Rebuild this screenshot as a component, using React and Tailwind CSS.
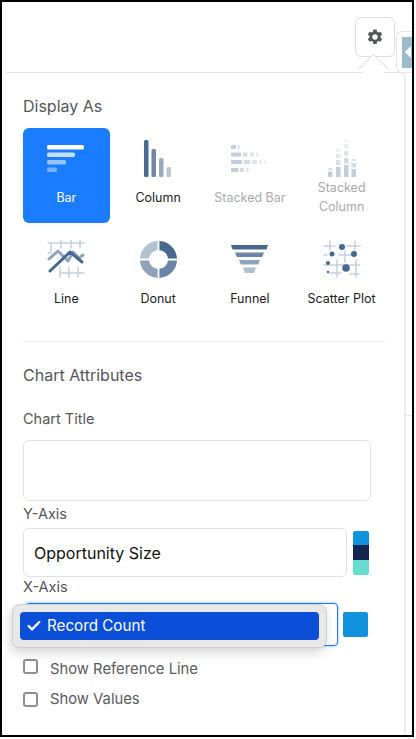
import React from 'react';
import { Check } from 'lucide-react';

const BarIcon = () => (
    <svg width="38" height="27" viewBox="0 0 38 27">
        <rect x="0" y="0" width="37" height="4.500" rx="1.500" fill="#ffffff" />
        <rect x="0" y="7.500" width="28" height="4.500" rx="1.500" fill="#ffffff" fillOpacity=".75" />
        <rect x="0" y="15" width="19" height="4.500" rx="1.500" fill="#ffffff" fillOpacity=".55" />
        <rect x="0" y="22.500" width="10" height="4.500" rx="1.500" fill="#ffffff" fillOpacity=".4" />
    </svg>
);

const ColumnIcon = () => (
    <svg width="28" height="37" viewBox="0 0 28 37">
        <rect x="0" y="0" width="4.500" height="37" rx="1.500" fill="#4a6a90" />
        <rect x="7.500" y="9" width="4.500" height="28" rx="1.500" fill="#6f88a8" />
        <rect x="15" y="18" width="4.500" height="19" rx="1.500" fill="#98a9c0" />
        <rect x="22.500" y="27" width="4.500" height="10" rx="1.500" fill="#bac6d6" />
    </svg>
);

const StackedBarIcon = () => (
    <svg width="37" height="27" viewBox="0 0 37 27">
        <g fill="#c3cedb">
            <rect x="0" y="0" width="5" height="4" rx="1" />
            <rect x="6.500" y="0" width="2" height="4" fill="#dde3ea" />
            <rect x="0" y="7.500" width="10" height="4" rx="1" />
            <rect x="12" y="7.500" width="4.500" height="4" fill="#d3dbe5" />
            <rect x="19" y="7.500" width="3.500" height="4" fill="#e0e5ec" />
            <rect x="25" y="7.500" width="2.500" height="4" fill="#e9edf1" />
            <rect x="0" y="15" width="11" height="4" rx="1" />
            <rect x="13" y="15" width="6" height="4" fill="#d3dbe5" />
            <rect x="21" y="15" width="5" height="4" fill="#e0e5ec" />
            <rect x="28" y="15" width="3" height="4" fill="#e9edf1" />
            <rect x="33" y="15" width="3" height="4" fill="#f2f4f7" />
            <rect x="0" y="23" width="7.500" height="4" rx="1" />
            <rect x="9" y="23" width="4" height="4" fill="#d3dbe5" />
            <rect x="15" y="23" width="2.500" height="4" fill="#e0e5ec" />
        </g>
    </svg>
);

const StackedColumnIcon = () => (
    <svg width="28" height="37" viewBox="0 0 28 37">
        <rect x="0" y="28" width="4.500" height="2" fill="#d9e0e8" />
        <rect x="0" y="31.500" width="4.500" height="5.500" rx="1" fill="#c3cedb" />
        <rect x="8" y="9" width="4.500" height="3" fill="#eef1f4" />
        <rect x="8" y="14" width="4.500" height="4" fill="#e4e9ef" />
        <rect x="8" y="20" width="4.500" height="5" fill="#d9e0e8" />
        <rect x="8" y="27" width="4.500" height="10" fill="#c3cedb" />
        <rect x="16" y="0" width="4.500" height="2.500" fill="#f2f4f7" />
        <rect x="16" y="4" width="4.500" height="4" fill="#e9edf1" />
        <rect x="16" y="11" width="4.500" height="4.500" fill="#dfe4eb" />
        <rect x="16" y="18" width="4.500" height="5.500" fill="#d2dae4" />
        <rect x="16" y="25" width="4.500" height="12" fill="#c3cedb" />
        <rect x="23.500" y="19" width="4.500" height="2" fill="#dfe4eb" />
        <rect x="23.500" y="23" width="4.500" height="4.500" fill="#d2dae4" />
        <rect x="23.500" y="29" width="4.500" height="8" fill="#c3cedb" />
    </svg>
);

const LineIcon = () => (
    <svg width="38" height="38" viewBox="0 0 38 38" fill="none">
        <g stroke="#c5d0dd" strokeWidth="1.500" strokeLinecap="round">
            <path d="M1 3h36M4 3v10M1 13h3M14 0v8M24 0v8M33 0v8" />
            <path d="M13 33h24M13 27v10M22 27v10M31 27v10" />
        </g>
        <path d="M2 19l9-8 6 6 4 4 5-9 6 6 4-3" stroke="#92a5bd" strokeWidth="3" strokeLinecap="round" strokeLinejoin="round" />
        <path d="M3 31l20-19 12 10" stroke="#47688f" strokeWidth="3" strokeLinecap="round" strokeLinejoin="round" />
    </svg>
);

const DonutIcon = () => (
    <svg width="37" height="37" viewBox="0 0 37 37" fill="none">
        <g strokeWidth="9">
            <path d="M18.500 4.500A14 14 0 0 1 32.500 18.500" stroke="#47688f" />
            <path d="M32.500 18.500A14 14 0 0 1 18.500 32.500" stroke="#6b85a6" />
            <path d="M18.500 32.500A14 14 0 0 1 4.500 18.500" stroke="#8fa2ba" />
            <path d="M4.500 18.500A14 14 0 0 1 18.500 4.500" stroke="#b3c0d0" />
        </g>
        <path d="M18.500 0v37M0 18.500h37" stroke="#ffffff" strokeWidth="1.800" />
    </svg>
);

const FunnelIcon = () => (
    <svg width="37" height="28" viewBox="0 0 37 28">
        <path d="M0 0h37l-1.500 4.500H1.500z" fill="#47688f" />
        <path d="M4 7.500h29l-1.800 4.500H5.800z" fill="#6b85a6" />
        <path d="M8 15h21l-1.800 4.500H9.800z" fill="#8fa2ba" />
        <path d="M12 22.500h13L23.200 28H13.800z" fill="#b3c0d0" />
    </svg>
);

const ScatterIcon = () => (
    <svg width="38" height="38" viewBox="0 0 38 38" fill="none">
        <g stroke="#c5d0dd" strokeWidth="1.500" strokeLinecap="round">
            <path d="M1 6h11M7 1v9M24 6h13M32 1v9" />
            <path d="M1 15h3M16 15h14M22 11v11M1 25h36M14 20v17M33 20v17M27 34h9M7 33h11" />
        </g>
        <circle cx="19" cy="7" r="3" fill="#47688f" />
        <circle cx="9" cy="14" r="2.500" fill="#47688f" />
        <circle cx="31" cy="14" r="3" fill="#47688f" />
        <circle cx="5" cy="23" r="2" fill="#47688f" />
        <circle cx="23" cy="28" r="3.800" fill="#47688f" />
        <circle cx="5" cy="32" r="1.200" fill="#47688f" />
    </svg>
);

const GearIcon = () => (
    <svg width="16" height="17" viewBox="0 0 16 17">
        <path fillRule="evenodd" fill="#54565a" d="M6.400.5h3.200l.5 2.200 1.300.7 2.100-.7 1.600 2.800-1.600 1.500v1.500l1.600 1.500-1.600 2.800-2.100-.7-1.300.7-.5 2.200H6.400l-.5-2.200-1.300-.7-2.100.7L.900 10l1.600-1.500V7L.900 5.500l1.600-2.800 2.100.7 1.300-.7zM8 5.300a2.700 2.700 0 1 0 0 5.400 2.700 2.700 0 0 0 0-5.400z" />
    </svg>
);

const tiles = [
    { label: 'Bar', icon: <BarIcon />, active: true },
    { label: 'Column', icon: <ColumnIcon /> },
    { label: 'Stacked Bar', icon: <StackedBarIcon />, disabled: true },
    { label: 'Stacked Column', icon: <StackedColumnIcon />, disabled: true, tall: true },
    { label: 'Line', icon: <LineIcon /> },
    { label: 'Donut', icon: <DonutIcon /> },
    { label: 'Funnel', icon: <FunnelIcon /> },
    { label: 'Scatter Plot', icon: <ScatterIcon /> },
];

const Tile = ({ label, icon, active, disabled, tall }) => (
    <div className={`flex h-[95px] flex-col items-center rounded-md text-center text-[12.500px] leading-[19px] ${active ? 'bg-[#1a7cff] text-white' : disabled ? 'text-[#a9a9ab]' : 'text-[#1c1c1e]'}`}>
        <div className="flex h-[60px] shrink-0 items-center justify-center">{icon}</div>
        <div className={tall ? '-mt-[10px]' : ''}>{label}</div>
    </div>
);

const Field = ({ children, className }) => (
    <div className={`rounded-md border border-[#e2e2e2] bg-white ${className}`}>{children}</div>
);

const CheckRow = ({ label, boxClass }) => (
    <label className="flex h-[30px] items-center gap-[12px]">
        <span className={`h-[15px] w-[15px] rounded-[3px] border-2 border-[#8e8e8e] bg-white ${boxClass}`} />
        <span className="mt-[1px] text-[14.800px] text-[#5a5a5e]">{label}</span>
    </label>
);

export default function App() {
    return (
        <div className="relative h-[739px] w-[416px] overflow-hidden bg-white font-['Inter',sans-serif]">
            <div className="relative flex h-[737px] w-[414px] flex-col overflow-hidden border-2 border-black">
                {/* gear button */}
                <div className="flex h-[70px] shrink-0 justify-end pr-[17px] pt-[15px]">
                    <div className="flex h-[40px] w-[40px] items-center justify-center rounded-md border border-[#dedede] bg-white">
                        <GearIcon />
                    </div>
                </div>

                {/* popover */}
                <div className="mr-[6px] ml-[1px] flex-1 rounded-t-md border-x-2 border-t border-x-[#ededed] border-t-[#e4e4e4] border-l-transparent bg-white pl-[18px] pr-[18px]">
                    <div className="pt-[23px] text-[16px] leading-[20px] text-[#56565a]">Display As</div>

                    <div className="mt-[12px] grid w-[362px] grid-cols-4 gap-x-[5px] gap-y-[6px]">
                        {tiles.map((tile) => <Tile key={tile.label} {...tile} />)}
                    </div>

                    <div className="mt-[17px] w-[362px] border-t border-[#ececec]" />

                    <div className="mt-[23px] text-[16px] leading-[20px] text-[#56565a]">Chart Attributes</div>

                    <div className="mt-[25px] text-[14.500px] leading-[18px] text-[#56565a]">Chart Title</div>
                    <Field className="mt-[12px] h-[61px] w-[348px]" />

                    <div className="mt-[4px] text-[14.500px] leading-[18px] text-[#56565a]">Y-Axis</div>
                    <div className="mt-[5px] flex w-[346px] items-center gap-[6px]">
                        <Field className="flex h-[49px] w-[324px] items-center px-[10px] text-[16px] text-[#111111]">Opportunity Size</Field>
                        <div className="flex h-[44px] w-[16px] flex-col overflow-hidden rounded-[2px]">
                            <div className="flex-1 bg-[#1192dd]" />
                            <div className="flex-1 bg-[#14264f]" />
                            <div className="flex-1 bg-[#67dccf]" />
                        </div>
                    </div>

                    <div className="mt-[1px] text-[14.500px] leading-[18px] text-[#56565a]">X-Axis</div>
                    <div className="mt-[7px] flex w-[346px] items-center gap-[5px] pl-[2px]">
                        <div className="h-[43px] w-[313px] rounded-[4px] border-[1.500px] border-[#1f7aff] bg-white shadow-[0_0_3px_#7fb2ff]" />
                        <div className="h-[25px] w-[25px] rounded-[2px] bg-[#1192dd]" />
                    </div>

                    <div className="mt-[8px]">
                        <CheckRow label="Show Reference Line" boxClass="-mt-[5px]" />
                        <CheckRow label="Show Values" />
                    </div>
                </div>

                {/* select menu open over the x-axis field */}
                <div className="absolute left-[10px] top-[602px] flex h-[44px] w-[315px] items-center rounded-lg border border-[#cfcfcf] bg-[#e8e8e8] px-[7px] shadow-[-2px_5px_12px_rgba(0,0,0,0.16)]">
                    <div className="flex h-[28px] w-full items-center rounded-[4px] bg-[#0b4fd9] pl-[6px] text-[15.200px] text-white">
                        <Check size={16} strokeWidth={3.5} className="mr-[5px]" />
                        Record Count
                    </div>
                </div>

                {/* arrow under the gear */}
                <div className="absolute left-[361px] top-[56px] h-[21px] w-[21px] rotate-45 border-l border-t border-[#dedede] bg-white" />
                <div className="absolute left-[350px] top-[71px] h-[6px] w-[44px] bg-white" />

                {/* sliver of the next panel */}
                <div className="absolute left-[394px] top-[29px] flex h-[42px] w-[16px] items-center rounded-l-md border border-r-0 border-[#e6e6e6] bg-white pl-[5px]">
                    <div className="flex h-[31px] w-[11px] items-center bg-[#9dbccb] pl-[3px]">
                        <div className="h-0 w-0 border-y-[6px] border-r-[6px] border-y-transparent border-r-white" />
                    </div>
                </div>
                <div className="absolute left-[403px] top-[413px] w-[7px] border-t border-[#e6e6e6]" />
            </div>
        </div>
    );
}
